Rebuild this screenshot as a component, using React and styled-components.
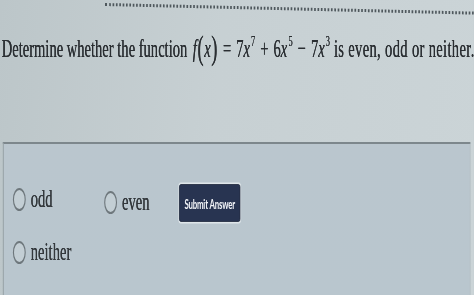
import React from "react"
import styled, { createGlobalStyle } from "styled-components"

// the photo is squeezed sideways, so the page is laid out at natural width
// and squeezed as a whole
const SQUEEZE = 0.56

const GlobalStyle = createGlobalStyle`
  html, body {
    margin: 0;
    padding: 0;
    width: 474px;
    height: 295px;
    overflow: hidden;
    background: #c4cdd0;
  }
`

const Page = styled.div`
  width: ${474 / SQUEEZE}px;
  height: 295px;
  transform: scaleX(${SQUEEZE});
  transform-origin: top left;
  display: flex;
  flex-direction: column;
  font-family: "Liberation Serif", "Times New Roman", serif;
  color: #2a2e32;
  background: linear-gradient(100deg, #bcc6c9 0%, #c7d0d3 45%, #cbd4d7 100%);
  filter: blur(0.45px);
`

const TopRule = styled.div`
  height: 0;
  margin: 3px 0 0 188px;
  border-top: 3px dotted #4f585d;
  transform: rotate(0.75deg);
  transform-origin: left;
`

const Question = styled.div`
  margin-top: 27px;
  padding-left: 3px;
  font-size: 26px;
  line-height: 30px;
  white-space: nowrap;
  text-shadow: 0 0 0.7px #2a2e32;
`

const Tail = styled.span`
  letter-spacing: 0.6px;
`

const Math = styled.span`
  margin: 0 7px 0 10px;
`

const Var = styled.i`
  font-style: italic;
`

const Paren = styled.span`
  font-size: 33px;
  font-weight: 300;
  vertical-align: -2px;
  margin: 0 1px;
`

const Op = styled.span`
  margin: 0 9px;
`

const Sup = styled.sup`
  font-size: 15px;
  vertical-align: 11px;
  line-height: 0;
  margin-left: 2px;
`

const Panel = styled.div`
  flex: 1;
  margin: 78px 6px 0 5px;
  border-top: 2px solid #7d878c;
  border-left: 2px solid #9aa5ab;
  border-right: 1px solid #a7b3ba;
  background: linear-gradient(180deg, #bac6ce 0%, #b9c6ce 100%);
  padding: 40px 0 0 16px;
  display: grid;
  grid-template-columns: 163px 134px auto;
  grid-template-rows: 38px 30px;
  row-gap: 15px;
  align-items: center;
  justify-items: start;
`

const Option = styled.label`
  display: flex;
  align-items: center;
  gap: 9px;
  font-size: 26px;
  line-height: 30px;
  color: #33383c;
  margin-top: ${p => p.shift || 0}px;
  text-shadow: 0 0 0.6px #33383c;
`

const Circle = styled.span`
  width: 19px;
  height: 19px;
  border: 2px solid #6e777c;
  border-radius: 50%;
  background: #c3ced4;
`

const SubmitButton = styled.button`
  width: 109px;
  height: 38px;
  border: 1px solid #1b2439;
  border-radius: 3px;
  background: #283451;
  box-shadow: 0 0 0 1.5px #dfe6ea;
  color: #f2f4f8;
  font-family: Lato, "Open Sans", sans-serif;
  font-weight: 700;
  font-size: 14px;
  letter-spacing: -0.3px;
  padding: 0;
  white-space: nowrap;
`

export default function App() {
  return (
    <>
      <GlobalStyle />
      <Page>
        <TopRule />
        <Question>
          Determine whether the function
          <Math>
            <Var>f</Var>
            <Paren>(</Paren>
            <Var>x</Var>
            <Paren>)</Paren>
            <Op>=</Op>7<Var>x</Var>
            <Sup>7</Sup>
            <Op>+</Op>6<Var>x</Var>
            <Sup>5</Sup>
            <Op>−</Op>7<Var>x</Var>
            <Sup>3</Sup>
          </Math>
          <Tail>is even, odd or neither.</Tail>
        </Question>
        <Panel>
          <Option shift={-8}>
            <Circle />
            odd
          </Option>
          <Option shift={-2}>
            <Circle />
            even
          </Option>
          <SubmitButton>Submit Answer</SubmitButton>
          <Option>
            <Circle />
            neither
          </Option>
        </Panel>
      </Page>
    </>
  )
}
